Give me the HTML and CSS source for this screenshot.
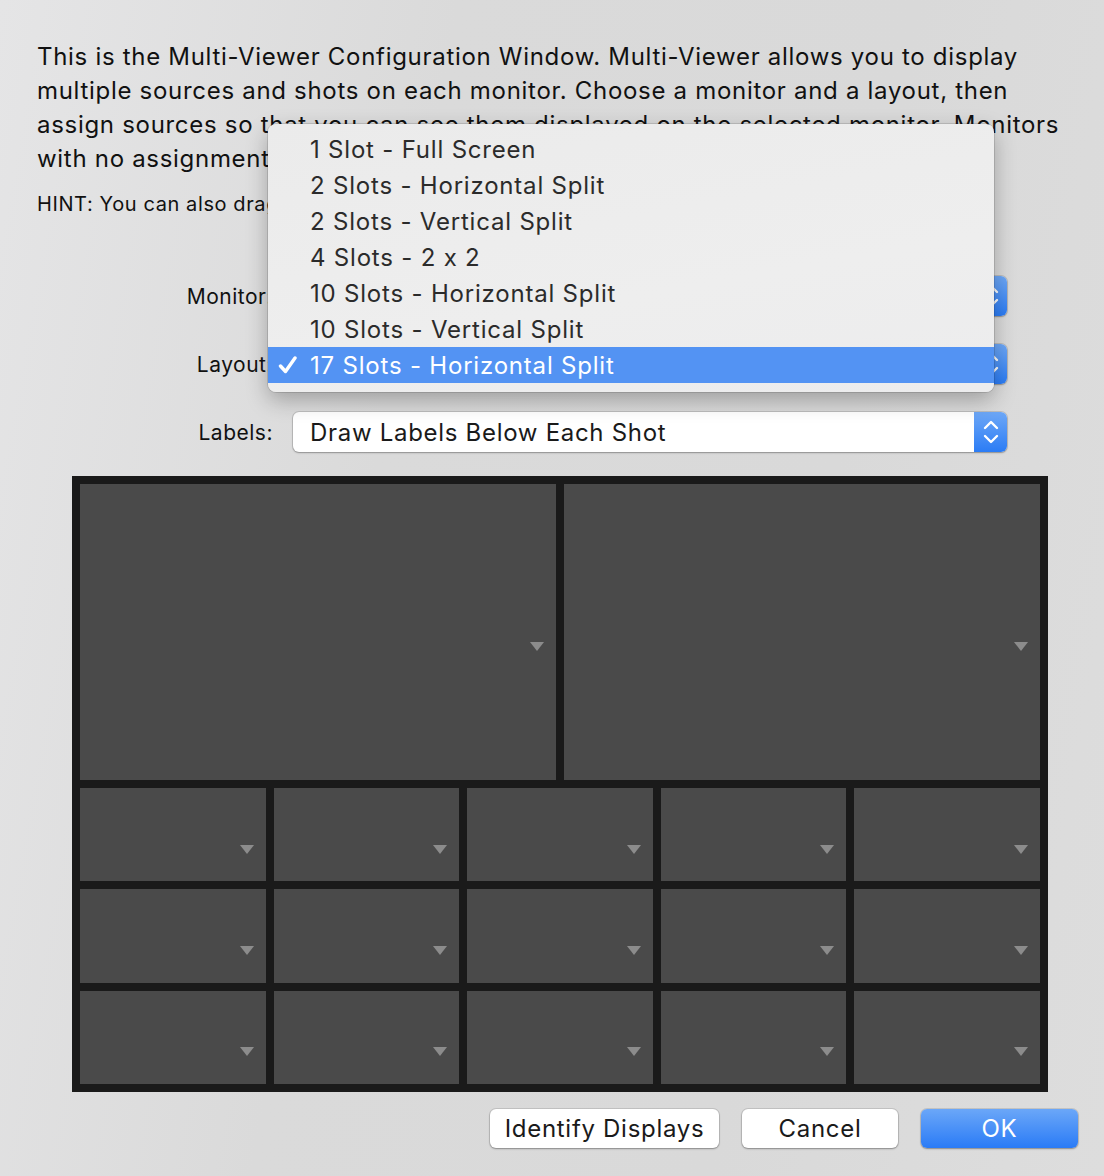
FILE: index.html
```html
<!DOCTYPE html>
<html>
<head>
<meta charset="utf-8">
<link rel="stylesheet" href="styles.css">
</head>
<body>
<div class="window">
  <p class="intro">This is the Multi-Viewer Configuration Window. Multi-Viewer allows you to display<br>multiple sources and shots on each monitor. Choose a monitor and a layout, then<br>assign sources so that you can see them displayed on the selected monitor. Monitors<br>with no assignments show their normal output.</p>
  <p class="hint">HINT: You can also drag sources onto the slots below to assign them.</p>

  <div class="form">
    <div class="row">
      <span class="lbl">Monitor:</span>
      <div class="select"><span class="value">Monitor 1</span><span class="stepper"><svg width="16" height="26" viewBox="0 0 16 26"><path d="M2 9 L8 3 L14 9 M2 17 L8 23 L14 17" fill="none" stroke="#fff" stroke-width="2.4" stroke-linecap="round" stroke-linejoin="round"/></svg></span></div>
    </div>
    <div class="row">
      <span class="lbl">Layout:</span>
      <div class="select"><span class="value">17 Slots - Horizontal Split</span><span class="stepper"><svg width="16" height="26" viewBox="0 0 16 26"><path d="M2 9 L8 3 L14 9 M2 17 L8 23 L14 17" fill="none" stroke="#fff" stroke-width="2.4" stroke-linecap="round" stroke-linejoin="round"/></svg></span></div>
    </div>
    <div class="row">
      <span class="lbl">Labels:</span>
      <div class="select"><span class="value">Draw Labels Below Each Shot</span><span class="stepper"><svg width="16" height="26" viewBox="0 0 16 26"><path d="M2 9 L8 3 L14 9 M2 17 L8 23 L14 17" fill="none" stroke="#fff" stroke-width="2.4" stroke-linecap="round" stroke-linejoin="round"/></svg></span></div>
    </div>
  </div>

  <div class="frame">
    <div class="cell big"><span class="arrow"></span></div>
    <div class="cell big"><span class="arrow"></span></div>
    <div class="cell"><span class="arrow"></span></div>
    <div class="cell"><span class="arrow"></span></div>
    <div class="cell"><span class="arrow"></span></div>
    <div class="cell"><span class="arrow"></span></div>
    <div class="cell"><span class="arrow"></span></div>
    <div class="cell"><span class="arrow"></span></div>
    <div class="cell"><span class="arrow"></span></div>
    <div class="cell"><span class="arrow"></span></div>
    <div class="cell"><span class="arrow"></span></div>
    <div class="cell"><span class="arrow"></span></div>
    <div class="cell"><span class="arrow"></span></div>
    <div class="cell"><span class="arrow"></span></div>
    <div class="cell"><span class="arrow"></span></div>
    <div class="cell"><span class="arrow"></span></div>
    <div class="cell"><span class="arrow"></span></div>
  </div>

  <div class="buttons">
    <button class="btn identify">Identify Displays</button>
    <button class="btn cancel">Cancel</button>
    <button class="btn ok">OK</button>
  </div>

  <div class="menu">
    <div class="item"><span class="check"></span>1 Slot - Full Screen</div>
    <div class="item"><span class="check"></span>2 Slots - Horizontal Split</div>
    <div class="item"><span class="check"></span>2 Slots - Vertical Split</div>
    <div class="item"><span class="check"></span>4 Slots - 2 x 2</div>
    <div class="item"><span class="check"></span>10 Slots - Horizontal Split</div>
    <div class="item"><span class="check"></span>10 Slots - Vertical Split</div>
    <div class="item selected"><span class="check"><svg width="20" height="18" viewBox="0 0 20 18"><path d="M2.5 10 L7.5 15.5 L17 2" fill="none" stroke="#fff" stroke-width="3.4" stroke-linecap="round" stroke-linejoin="round"/></svg></span>17 Slots - Horizontal Split</div>
  </div>
</div>
</body>
</html>
```

FILE: styles.css
```css
html, body {
  margin: 0;
  padding: 0;
}

body {
  width: 1104px;
  height: 1176px;
  overflow: hidden;
  font-family: Inter, "Noto Sans", "Liberation Sans", sans-serif;
  font-feature-settings: "calt" 0;
  color: #000;
  background: linear-gradient(100deg, #e5e5e6 0%, #dadada 35%, #d9d9d9 70%, #dddddd 100%);
}

.window {
  position: relative;
  height: 1176px;
  box-sizing: border-box;
  padding: 40px 0 0 37px;
}

.intro {
  margin: 0;
  font-size: 24px;
  line-height: 34px;
  letter-spacing: 0.7px;
  white-space: nowrap;
  color: #111;
}

.hint {
  margin: 14px 0 0;
  font-size: 20px;
  line-height: 28px;
  letter-spacing: 0.6px;
  white-space: nowrap;
  color: #111;
}

.form {
  margin-top: 58px;
  display: flex;
  flex-direction: column;
  gap: 28px;
}

.row {
  display: flex;
  align-items: center;
  height: 40px;
}

.lbl {
  width: 236px;
  text-align: right;
  font-size: 21px;
  letter-spacing: 0.5px;
  margin-right: 20px;
  color: #111;
}

.select {
  width: 714px;
  height: 40px;
  box-sizing: border-box;
  display: flex;
  align-items: center;
  background: #fff;
  border-radius: 6px;
  box-shadow: 0 0 0 1px rgba(0,0,0,0.12), 0 1px 2px rgba(0,0,0,0.25);
  overflow: hidden;
}

.value {
  flex: 1;
  padding-left: 17px;
  font-size: 24px;
  letter-spacing: 0.7px;
  color: #1a1a1a;
  white-space: nowrap;
}

.stepper {
  width: 33px;
  height: 40px;
  display: flex;
  align-items: center;
  justify-content: center;
  background: linear-gradient(#6ea8f7, #2b7cf5);
}

.frame {
  margin: 24px 0 0 35px;
  width: 976px;
  height: 616px;
  box-sizing: border-box;
  padding: 8px;
  background: #1a1a1a;
  display: grid;
  grid-template-columns: repeat(10, 1fr);
  grid-template-rows: 296px 1fr 1fr 1fr;
  gap: 8px;
}

.cell {
  grid-column: span 2;
  background: #4a4a4a;
  display: flex;
  align-items: center;
  justify-content: flex-end;
  padding: 29px 12px 0 0;
}

.cell.big {
  grid-column: span 5;
}

.arrow {
  width: 0;
  height: 0;
  border-left: 7.5px solid transparent;
  border-right: 7.5px solid transparent;
  border-top: 9px solid #8c8c8c;
}

.buttons {
  margin-top: 17px;
  padding-right: 26px;
  display: flex;
  justify-content: flex-end;
  gap: 23px;
}

.btn {
  height: 39px;
  border: none;
  border-radius: 6px;
  background: #fff;
  font-family: inherit;
  font-size: 24px;
  letter-spacing: 0.7px;
  color: #1a1a1a;
  padding: 0;
  box-shadow: 0 0 0 1px rgba(0,0,0,0.1), 0 1px 2px rgba(0,0,0,0.3);
}

.identify { width: 229px; }
.cancel { width: 156px; }
.ok {
  width: 157px;
  color: #fff;
  background: linear-gradient(#6ba7f8, #2a7bf6);
}

.menu {
  position: absolute;
  left: 268px;
  top: 124px;
  width: 726px;
  height: 268px;
  box-sizing: border-box;
  padding-top: 7px;
  border-radius: 8px;
  background: linear-gradient(170deg, #ebebeb, #eeeeee 60%, #ececed);
  box-shadow: 0 0 0 1px rgba(0,0,0,0.12), 0 8px 22px rgba(0,0,0,0.28);
}

.item {
  height: 36px;
  display: flex;
  align-items: center;
  font-size: 24px;
  letter-spacing: 0.8px;
  color: #2b2b2b;
  white-space: nowrap;
}

.check {
  width: 42px;
  height: 36px;
  display: flex;
  align-items: center;
  justify-content: flex-end;
  box-sizing: border-box;
}

.check svg {
  margin-right: 12px;
}

.item.selected {
  background: #5393f3;
  color: #fff;
}
```
